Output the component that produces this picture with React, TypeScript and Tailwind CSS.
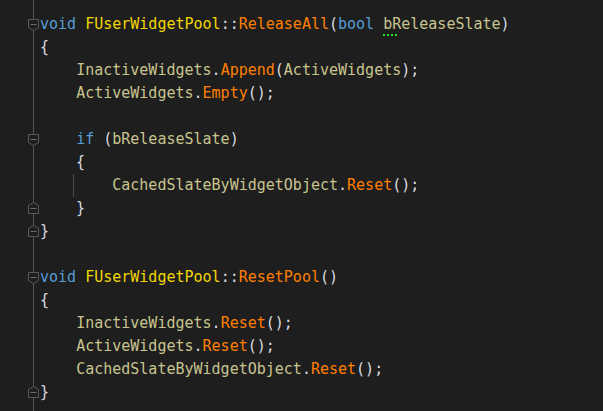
import React from "react";

type Tok = [string, string];
const K = "text-[#569cd6]";
const C = "text-[#f2d600]";
const F = "text-[#ff8000]";
const I = "text-[#c8c48e]";
const P = "text-[#d8dce0]";

type Line = { toks: Tok[]; marker?: "start" | "end"; guide?: boolean };

const lines: Line[] = [
  {
    marker: "start",
    toks: [
      ["void", K],
      [" ", P],
      ["FUserWidgetPool", C],
      ["::", P],
      ["ReleaseAll", F],
      ["(", P],
      ["bool", K],
      [" ", P],
      ["SQUIGGLE", I],
      ["ReleaseSlate", I],
      [")", P],
    ],
  },
  { toks: [["{", P]] },
  {
    toks: [
      ["    ", P],
      ["InactiveWidgets", I],
      [".", P],
      ["Append", F],
      ["(", P],
      ["ActiveWidgets", I],
      [");", P],
    ],
  },
  {
    toks: [
      ["    ", P],
      ["ActiveWidgets", I],
      [".", P],
      ["Empty", F],
      ["();", P],
    ],
  },
  { toks: [] },
  {
    marker: "start",
    toks: [
      ["    ", P],
      ["if", K],
      [" (", P],
      ["bReleaseSlate", I],
      [")", P],
    ],
  },
  { toks: [["    {", P]] },
  {
    guide: true,
    toks: [
      ["        ", P],
      ["CachedSlateByWidgetObject", I],
      [".", P],
      ["Reset", F],
      ["();", P],
    ],
  },
  { marker: "end", toks: [["    }", P]] },
  { marker: "end", toks: [["}", P]] },
  { toks: [] },
  {
    marker: "start",
    toks: [
      ["void", K],
      [" ", P],
      ["FUserWidgetPool", C],
      ["::", P],
      ["ResetPool", F],
      ["()", P],
    ],
  },
  { toks: [["{", P]] },
  {
    toks: [
      ["    ", P],
      ["InactiveWidgets", I],
      [".", P],
      ["Reset", F],
      ["();", P],
    ],
  },
  {
    toks: [
      ["    ", P],
      ["ActiveWidgets", I],
      [".", P],
      ["Reset", F],
      ["();", P],
    ],
  },
  {
    toks: [
      ["    ", P],
      ["CachedSlateByWidgetObject", I],
      [".", P],
      ["Reset", F],
      ["();", P],
    ],
  },
  { marker: "end", toks: [["}", P]] },
];

function Gutter({ marker }: { marker?: "start" | "end" }) {
  return (
    <svg width="40" height="23" viewBox="0 0 40 23" className="block shrink-0">
      <line x1="33.5" y1="0" x2="33.5" y2="23" stroke="#555555" strokeWidth="1" />
      {marker === "start" && (
        <g>
          <polygon
            points="28.5,6.5 38.5,6.5 38.5,14.5 33.5,17.5 28.5,14.5"
            fill="#1e1e1e"
            stroke="#5a5a5a"
            strokeWidth="1"
          />
          <line x1="30.5" y1="11.5" x2="36.5" y2="11.5" stroke="#6a6a6a" strokeWidth="1" />
        </g>
      )}
      {marker === "end" && (
        <g>
          <polygon
            points="28.5,8.5 33.5,5.5 38.5,8.5 38.5,16.5 28.5,16.5"
            fill="#1e1e1e"
            stroke="#5a5a5a"
            strokeWidth="1"
          />
          <line x1="30.5" y1="11.5" x2="36.5" y2="11.5" stroke="#6a6a6a" strokeWidth="1" />
        </g>
      )}
    </svg>
  );
}

export default function App() {
  return (
    <div
      className="w-[603px] h-[411px] overflow-hidden bg-[#1e1e1e] flex flex-col text-[15px] leading-[23px]"
      style={{ fontFamily: '"DejaVu Sans Mono", "Liberation Mono", monospace' }}
    >
      <div className="h-[13px] shrink-0 ml-[33px] border-l border-[#555555]" />
      {lines.map((ln, i) => (
        <div key={i} className="flex h-[23px] shrink-0">
          <Gutter marker={ln.marker} />
          <div className="relative whitespace-pre">
            {ln.guide && (
              <div className="absolute left-[33px] top-0 w-px h-[23px] bg-[#4a4a4a]" />
            )}
            {ln.toks.map(([t, c], j) =>
              t === "SQUIGGLE" ? (
                <span key={j} className={`relative ${c}`}>
                  b
                  <span className="absolute left-0 top-[19px] w-[15px] h-[2px] bg-[repeating-linear-gradient(90deg,#22e022_0px,#22e022_2px,transparent_2px,transparent_4px)]" />
                </span>
              ) : (
                <span key={j} className={c}>
                  {t}
                </span>
              )
            )}
          </div>
        </div>
      ))}
      <div className="flex-1 ml-[33px] border-l border-[#555555]" />
    </div>
  );
}
